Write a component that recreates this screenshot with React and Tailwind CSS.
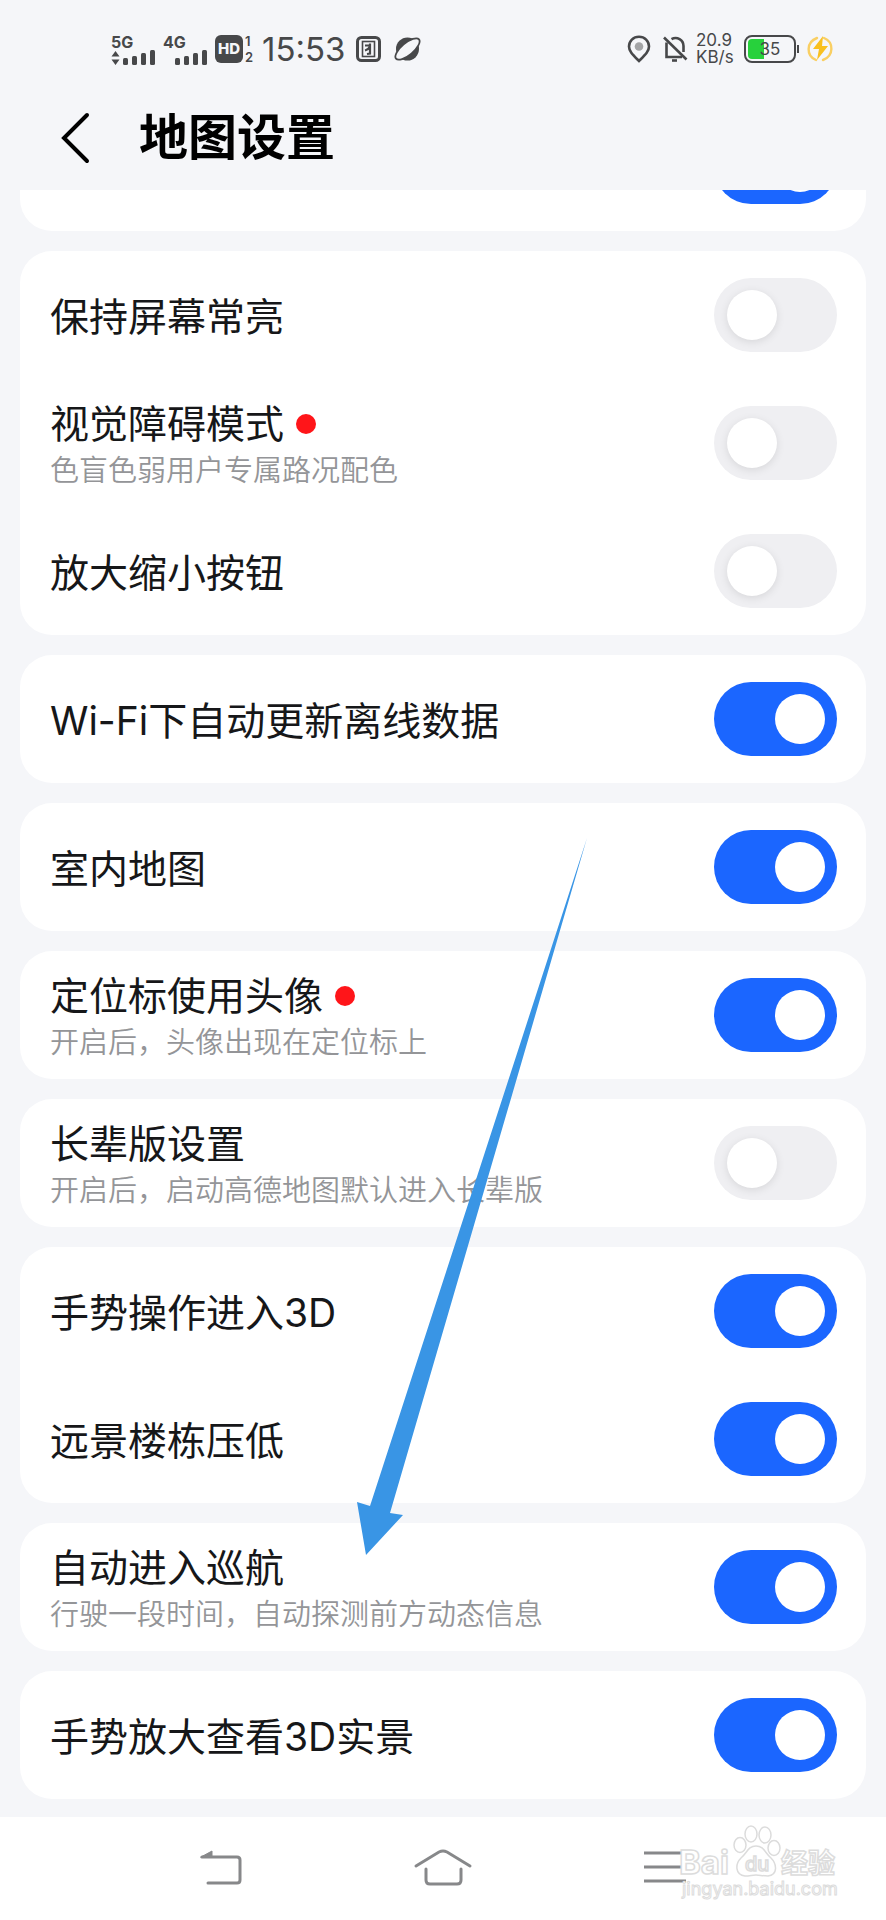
import { useState } from 'react';
import clsx from 'clsx';

const groups = [
  [
    { id: 'screen', title: '保持屏幕常亮', on: false },
    { id: 'vision', title: '视觉障碍模式', note: '色盲色弱用户专属路况配色', isNew: true, on: false },
    { id: 'zoom', title: '放大缩小按钮', on: false },
  ],
  [{ id: 'wifi', title: 'Wi-Fi下自动更新离线数据', on: true }],
  [{ id: 'indoor', title: '室内地图', on: true }],
  [{ id: 'avatar', title: '定位标使用头像', note: '开启后，头像出现在定位标上', isNew: true, on: true }],
  [{ id: 'elder', title: '长辈版设置', note: '开启后，启动高德地图默认进入长辈版', on: false }],
  [
    { id: 'gesture3d', title: '手势操作进入3D', on: true },
    { id: 'buildings', title: '远景楼栋压低', on: true },
  ],
  [{ id: 'cruise', title: '自动进入巡航', note: '行驶一段时间，自动探测前方动态信息', on: true }],
  [{ id: 'street3d', title: '手势放大查看3D实景', on: true }],
];

function Switch({ id, defaultOn, label }) {
  const [on, setOn] = useState(defaultOn);

  return (
    <span className="relative block h-[74px] w-[123px] shrink-0">
      <input
        id={id}
        type="checkbox"
        role="switch"
        aria-label={label}
        checked={on}
        onChange={(e) => setOn(e.target.checked)}
        className={clsx(
          'block h-full w-full cursor-pointer appearance-none rounded-full',
          on ? 'bg-[#1b66ff]' : 'bg-[#efeff2]'
        )}
      />
      <span
        className={clsx(
          'pointer-events-none absolute top-3 size-[50px] rounded-full bg-white',
          on ? 'right-3' : 'left-[13px] shadow-[0_2px_8px_rgba(0,0,0,0.10)]'
        )}
      />
    </span>
  );
}

function Row({ item }) {
  return (
    <div className="flex h-32 items-center justify-between pr-[29px] pl-[30px]">
      <label htmlFor={item.id} className={clsx('cursor-pointer', item.note ? 'pt-2' : 'pt-1')}>
        <span className="flex items-center gap-3 text-[39px] leading-[48px] text-[#161719]">
          {item.title}
          {item.isNew && <span className="size-5 rounded-full bg-[#ff1519]" />}
        </span>
        {item.note && <span className="block text-[29px] leading-[46px] font-[350] text-[#949598]">{item.note}</span>}
      </label>
      <Switch id={item.id} defaultOn={item.on} />
    </div>
  );
}

function SignalBars() {
  return (
    <svg width="33" height="15" viewBox="0 0 33 15" fill="#47484a">
      <rect x="0" y="8" width="5" height="7" rx="1.5" />
      <rect x="9" y="6" width="5" height="9" rx="1.5" />
      <rect x="18" y="3" width="5" height="12" rx="1.5" />
      <rect x="27" y="0" width="5" height="15" rx="1.5" />
    </svg>
  );
}

function StatusBar() {
  return (
    <div className="flex h-[98px] items-center justify-between pr-[53px] pl-[111px] text-[#47484a]">
      <div className="flex items-center">
        <div className="flex w-[52px] flex-col">
          <span className="text-[16px] leading-4 font-bold">5G</span>
          <span className="flex items-end gap-[3px]">
            <svg width="9" height="14" viewBox="0 0 9 14" fill="#47484a">
              <path d="M4.500 0L8.500 5.500H.5zM4.500 14L8.500 8.500H.5z" />
            </svg>
            <SignalBars />
          </span>
        </div>
        <div className="flex w-[52px] flex-col">
          <span className="text-[16px] leading-4 font-bold">4G</span>
          <span className="pl-3">
            <SignalBars />
          </span>
        </div>
        <span className="flex h-7 w-7 items-center justify-center rounded-md bg-[#47484a] text-[15px] font-extrabold text-[#f5f6f9]">
          HD
        </span>
        <span className="flex w-[19px] flex-col pl-[2px] text-[13px] leading-4 font-semibold">
          <span>1</span>
          <span>2</span>
        </span>
        <span className="w-[94px] text-[33px] leading-8">15:53</span>
        <svg width="25" height="26" viewBox="0 0 25 26" fill="none" stroke="#47484a">
          <rect x="1.500" y="1.500" width="22" height="23" rx="4" strokeWidth="3" />
          <rect x="6.500" y="5.500" width="12" height="15" strokeWidth="1.600" />
          <path d="M9 9.500h6M14 7.500v10l-3 .5M14 10.500c-1 2-3 3.500-5 4" strokeWidth="2.200" />
        </svg>
        <svg className="ml-3" width="29" height="26" viewBox="0 0 29 26">
          <circle cx="14.500" cy="13" r="11.500" fill="#47484a" />
          <ellipse cx="14.500" cy="13" rx="15" ry="6" transform="rotate(-40 14.500 13)" fill="#f5f6f9" stroke="#47484a" strokeWidth="1.800" />
        </svg>
      </div>

      <div className="flex items-center">
        <svg width="24" height="28" viewBox="0 0 24 28">
          <path d="M12 1.800c5.700 0 10 4.300 10 9.700 0 5-4 8.500-10 14.500C6 20 2 16.500 2 11.500c0-5.400 4.300-9.700 10-9.700z" fill="none" stroke="#47484a" strokeWidth="2.600" />
          <circle cx="12" cy="11.500" r="4.300" fill="#a3a4a6" />
        </svg>
        <svg className="ml-3" width="25" height="28" viewBox="0 0 25 28" fill="none" stroke="#47484a" strokeWidth="2.600">
          <path d="M3.500 7.500V22H19" />
          <path d="M8.500 4.200C14 1 20.500 5 20.500 11v6" />
          <path d="M1 2.500L23.500 24.500" />
          <path d="M9 25.500h5" />
        </svg>
        <span className="ml-2 flex w-12 flex-col text-[17px] leading-[17px]">
          <span>20.9</span>
          <span>KB/s</span>
        </span>
        <span className="relative flex h-7 w-[52px] items-center justify-center rounded-lg border-2 border-[#47484a] text-[17px] leading-5">
          <span className="absolute inset-y-[2px] left-[2px] w-4 rounded-l-[4px] bg-[#27d13c]" />
          <span className="relative">35</span>
        </span>
        <span className="ml-px h-2 w-[2px] bg-[#47484a]" />
        <svg className="ml-2" width="26" height="28" viewBox="0 0 26 28">
          <path d="M10 3C-1 7-1 21 9 25M17 3c10 4 10 18-1 22" fill="none" stroke="#f9cf63" strokeWidth="2.400" strokeLinecap="round" />
          <path d="M16 1L6 14h6l-2 11 11-14h-6z" fill="#f9c01f" />
        </svg>
      </div>
    </div>
  );
}

function Watermark() {
  return (
    <svg
      className="pointer-events-none absolute top-1 right-[46px]"
      width="164"
      height="84"
      viewBox="0 0 164 84"
      fill="#fff"
      stroke="#dcdcdc"
      strokeWidth="1.500"
      fontFamily="Inter, 'Noto Sans CJK SC', sans-serif"
    >
      <ellipse cx="64" cy="24" rx="6" ry="7.500" />
      <ellipse cx="75" cy="13" rx="6" ry="8" />
      <ellipse cx="89" cy="14" rx="6" ry="8" />
      <ellipse cx="98" cy="27" rx="6" ry="7.500" />
      <path d="M80 25c8 0 9 7 15 12 6 6 7 17-3 18-6 0-8-1-12-1s-6 1-11 1c-10-1-10-12-4-18 6-5 7-12 15-12z" />
      <text x="3" y="53" fontSize="33" fontWeight="700">Bai</text>
      <text x="69" y="50" fontSize="20" fontWeight="500">du</text>
      <text x="105" y="52" fontSize="27" fontWeight="700">经验</text>
      <text x="6" y="74" fontSize="18" strokeWidth="1">jingyan.baidu.com</text>
    </svg>
  );
}

function NavBar() {
  return (
    <nav className="relative grid h-[103px] grid-cols-3 items-center bg-white px-[110px] pb-1 text-[#87888a]">
      <button type="button" aria-label="返回" className="flex justify-center">
        <svg width="44" height="38" viewBox="0 0 44 38" fill="none" stroke="currentColor" strokeWidth="3" strokeLinecap="round">
          <path d="M3 9h35q3 0 3 3v20q0 3-3 3H9" />
          <path d="M2 9l11-6v6z" fill="currentColor" strokeWidth="1" />
        </svg>
      </button>
      <button type="button" aria-label="主页" className="flex justify-center">
        <svg width="60" height="38" viewBox="0 0 60 38" fill="none" stroke="currentColor" strokeWidth="3" strokeLinecap="round">
          <path d="M3 18L26 4q4-2 8 0l23 14" />
          <path d="M13 21v11q0 4 4 4h27q4 0 4-4V21" />
        </svg>
      </button>
      <button type="button" aria-label="最近任务" className="flex justify-center">
        <svg width="42" height="34" viewBox="0 0 42 34" stroke="currentColor" strokeWidth="3">
          <path d="M0 3h42M0 17h42M0 31h42" />
        </svg>
      </button>
      <Watermark />
    </nav>
  );
}

export default function App() {
  return (
    <div className="relative flex min-h-screen flex-col bg-[#f5f6f9] font-['Inter','Noto_Sans_CJK_SC',sans-serif]">
      <StatusBar />
      <header className="mb-3 flex h-20 items-center gap-12 pl-[60px]">
        <button type="button" aria-label="返回" className="cursor-pointer">
          <svg width="31" height="52" viewBox="0 0 31 52" fill="none" stroke="#000" strokeWidth="4" strokeLinecap="round">
            <path d="M27 3L4 26l23 23" />
          </svg>
        </button>
        <h1 className="text-[49px] leading-[60px] font-bold text-black">地图设置</h1>
      </header>

      <main className="flex flex-1 flex-col gap-5 px-5 pb-[18px]">
        {/* group scrolled half under the header */}
        <section className="flex h-[41px] items-end justify-end overflow-hidden rounded-b-[32px] bg-white pr-[29px] pb-[27px]">
          <Switch id="traffic" defaultOn label="路况" />
        </section>

        {groups.map((items) => (
          <section key={items[0].id} className="rounded-[32px] bg-white">
            {items.map((item) => (
              <Row key={item.id} item={item} />
            ))}
          </section>
        ))}
      </main>

      <NavBar />

      {/* arrow pointing at the cruise setting */}
      <svg className="pointer-events-none absolute top-[838px] left-[356px]" width="232" height="718" viewBox="0 0 232 718" fill="#3995e5">
        <path d="M231 0L34 675l13 2L10 717 1 664l13 4z" />
      </svg>
    </div>
  );
}
